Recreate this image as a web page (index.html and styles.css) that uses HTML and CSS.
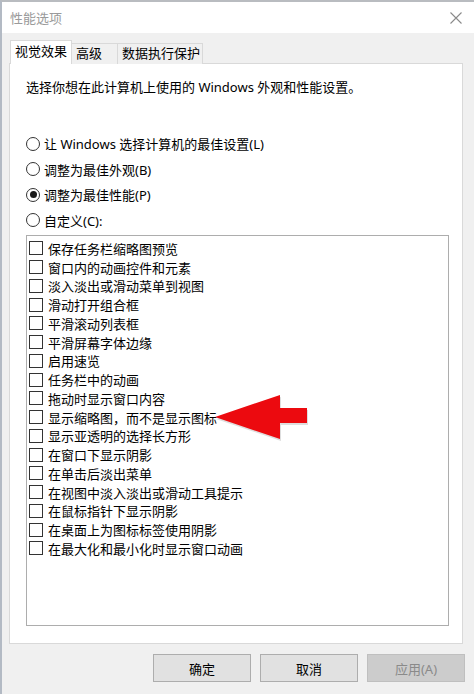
FILE: index.html
```html
<!DOCTYPE html>
<html lang="zh-CN">
<head>
<meta charset="utf-8">
<title>性能选项</title>
<link rel="stylesheet" href="styles.css">
</head>
<body>
<div class="window">
  <div class="titlebar">
    <span class="title">性能选项</span>
    <svg class="close" width="12" height="12" viewBox="0 0 12 12"><path d="M0.5 0.5L11.5 11.5M11.5 0.5L0.5 11.5" stroke="#8a8a8a" stroke-width="1.1" fill="none"/></svg>
  </div>
  <div class="dialog">
    <div class="tabs">
      <div class="tab active">视觉效果</div>
      <div class="tab t2">高级</div>
      <div class="tab t3">数据执行保护</div>
    </div>
    <div class="panel">
      <p class="desc">选择你想在此计算机上使用的 Windows 外观和性能设置。</p>
      <div class="radios">
        <div class="radio"><span class="circle"></span>让 Windows 选择计算机的最佳设置(L)</div>
        <div class="radio"><span class="circle"></span>调整为最佳外观(B)</div>
        <div class="radio"><span class="circle on"></span>调整为最佳性能(P)</div>
        <div class="radio"><span class="circle"></span>自定义(C):</div>
      </div>
      <div class="list">
        <div class="item"><span class="box"></span>保存任务栏缩略图预览</div>
        <div class="item"><span class="box"></span>窗口内的动画控件和元素</div>
        <div class="item"><span class="box"></span>淡入淡出或滑动菜单到视图</div>
        <div class="item"><span class="box"></span>滑动打开组合框</div>
        <div class="item"><span class="box"></span>平滑滚动列表框</div>
        <div class="item"><span class="box"></span>平滑屏幕字体边缘</div>
        <div class="item"><span class="box"></span>启用速览</div>
        <div class="item"><span class="box"></span>任务栏中的动画</div>
        <div class="item"><span class="box"></span>拖动时显示窗口内容</div>
        <div class="item"><span class="box"></span>显示缩略图，而不是显示图标</div>
        <div class="item"><span class="box"></span>显示亚透明的选择长方形</div>
        <div class="item"><span class="box"></span>在窗口下显示阴影</div>
        <div class="item"><span class="box"></span>在单击后淡出菜单</div>
        <div class="item"><span class="box"></span>在视图中淡入淡出或滑动工具提示</div>
        <div class="item"><span class="box"></span>在鼠标指针下显示阴影</div>
        <div class="item"><span class="box"></span>在桌面上为图标标签使用阴影</div>
        <div class="item"><span class="box"></span>在最大化和最小化时显示窗口动画</div>
      </div>
    </div>
    <div class="buttons">
      <button class="btn">确定</button>
      <button class="btn">取消</button>
      <button class="btn disabled">应用(A)</button>
    </div>
  </div>
  <svg class="arrow" width="100" height="52" viewBox="0 0 100 52">
    <polygon points="2,23 67,1 67,14 94,14 94,29 67,29 67,45" fill="#7a7a7a" opacity="0.25" transform="translate(1,2)"/>
    <polygon points="2,23 67,1 67,14 94,14 94,29 67,29 67,45" fill="#ec0a0f"/>
  </svg>
</div>
</body>
</html>
```
FILE: styles.css
```css
* { box-sizing: border-box; }
html, body { margin: 0; padding: 0; }
body {
  width: 474px;
  height: 694px;
  overflow: hidden;
  font-family: "Noto Sans", "Noto Sans CJK SC", sans-serif;
  font-size: 13px;
  color: #000;
  background: #f0f0f0;
}
.window {
  position: relative;
  width: 474px;
  height: 694px;
  border-top: 2px solid #b9bcc0;
  border-left: 2px solid #b3bac4;
  background: #f0f0f0;
  display: flex;
  flex-direction: column;
}
.titlebar {
  height: 31px;
  background: #fff;
  display: flex;
  align-items: center;
  justify-content: space-between;
  padding: 0 12px 0 8px;
  flex: none;
}
.title {
  color: #9a9a9a;
  font-size: 13px;
  line-height: 16px;
  margin-top: 1px;
}
.close { display: block; margin-top: 1px; }
.dialog {
  flex: 1;
  display: flex;
  flex-direction: column;
  padding: 8px 9px 0 7px;
}
.tabs {
  display: flex;
  align-items: flex-end;
  height: 23px;
  margin-bottom: -1px;
  padding-left: 1px;
  position: relative;
  z-index: 1;
}
.tab {
  height: 21px;
  line-height: 19px;
  border: 1px solid #d9d9d9;
  border-bottom: none;
  background: #f0f0f0;
  padding: 0 4px;
  white-space: nowrap;
}
.tab.active {
  height: 24px;
  width: 62px;
  background: #fff;
  padding: 0 4px;
  line-height: 21px;
}
.tab.t2 { width: 46px; border-left: none; }
.tab.t3 { width: 85px; border-left: none; }
.panel {
  width: 454px;
  height: 581px;
  background: #fff;
  border: 1px solid #d9d9d9;
  padding: 13px 13px 0 16px;
  flex: none;
}
.desc {
  margin: 0;
  line-height: 20px;
}
.radios {
  margin-top: 34px;
}
.radio {
  height: 25.5px;
  display: flex;
  align-items: center;
  white-space: nowrap;
}
.circle {
  width: 14px;
  height: 14px;
  border: 1px solid #333;
  border-radius: 50%;
  background: #fff;
  margin-right: 4px;
  display: flex;
  align-items: center;
  justify-content: center;
  flex: none;
}
.circle.on::after {
  content: "";
  width: 7px;
  height: 7px;
  border-radius: 50%;
  background: #1a1a1a;
}
.list {
  margin-top: 2px;
  width: 423px;
  height: 391px;
  border: 1px solid #adadad;
  padding: 3px 0 0 2px;
}
.item {
  height: 18.75px;
  display: flex;
  align-items: center;
  white-space: nowrap;
}
.box {
  width: 14px;
  height: 14px;
  border: 1px solid #333;
  background: #fff;
  margin-right: 5px;
  flex: none;
}
.buttons {
  margin-top: 10px;
  display: flex;
  justify-content: flex-end;
  gap: 9px;
}
.btn {
  width: 98px;
  height: 28px;
  font-family: "Noto Sans", "Noto Sans CJK SC", sans-serif;
  font-size: 13px;
  color: #000;
  background: #e1e1e1;
  border: 1px solid #adadad;
  padding: 0;
}
.btn.disabled {
  background: #cccccc;
  border-color: #bfbfbf;
  color: #8a8a8a;
}
.arrow {
  position: absolute;
  left: 211px;
  top: 392px;
}
```
